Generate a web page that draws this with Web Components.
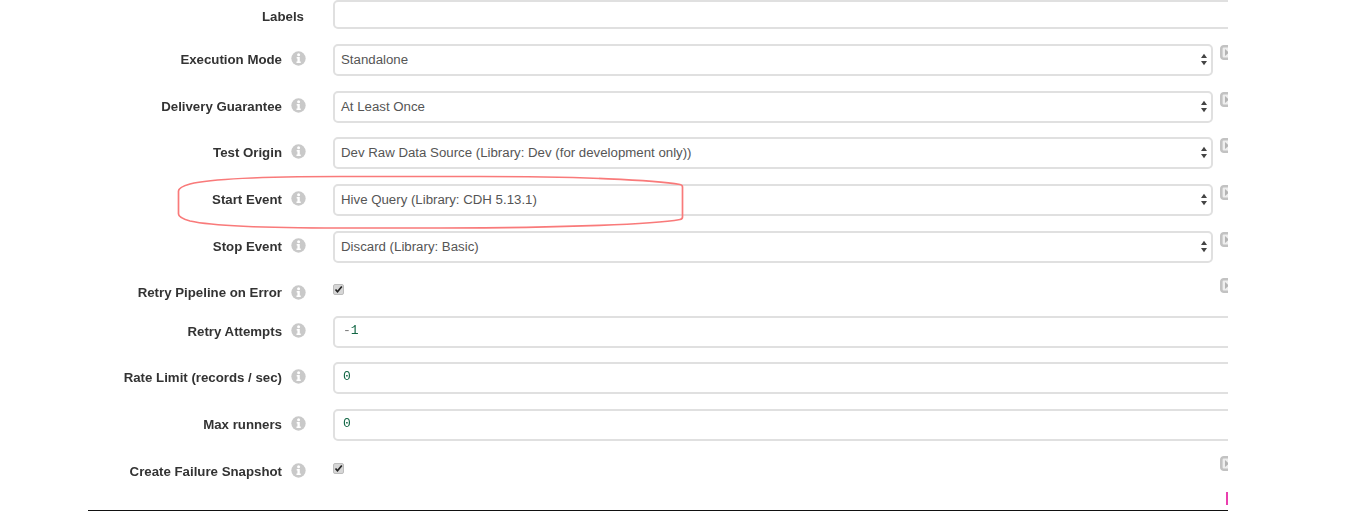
<!DOCTYPE html>
<html><head><meta charset="utf-8"><title>Pipeline configuration</title>
<style>
html,body{margin:0;background:#fff}
body{font:13.25px "Liberation Sans",Arial,sans-serif;color:#333}
</style></head><body>
<x-panel>
  <x-row label="Labels" h="44.4" noinfo><x-field h="29" overflow></x-field></x-row>
  <x-row label="Execution Mode" h="46.6" reset><x-select>Standalone</x-select></x-row>
  <x-row label="Delivery Guarantee" h="46.4" reset><x-select>At Least Once</x-select></x-row>
  <x-row label="Test Origin" h="46.6" reset><x-select>Dev Raw Data Source (Library: Dev (for development only))</x-select></x-row>
  <x-row label="Start Event" h="46.7" reset><x-select>Hive Query (Library: CDH 5.13.1)</x-select></x-row>
  <x-row label="Stop Event" h="46.3" reset><x-select>Discard (Library: Basic)</x-select></x-row>
  <x-row label="Retry Pipeline on Error" h="39" check reset><x-check></x-check></x-row>
  <x-row label="Retry Attempts" h="46.4" mono><x-field h="32" overflow mono><span style="color:#777">-</span><span style="color:#164">1</span></x-field></x-row>
  <x-row label="Rate Limit (records / sec)" h="46.5" mono><x-field h="32" overflow mono><span style="color:#164">0</span></x-field></x-row>
  <x-row label="Max runners" h="46.6" mono><x-field h="32" overflow mono><span style="color:#164">0</span></x-field></x-row>
  <x-row label="Create Failure Snapshot" h="46" check reset labdown><x-check></x-check></x-row>
</x-panel>
<script>
function def(name, css, html, init){
  customElements.define(name, class extends HTMLElement{
    constructor(){super();this.attachShadow({mode:'open'}).innerHTML='<style>'+css+'</style>'+html;}
    connectedCallback(){ if(init) init(this,this.shadowRoot); }
  });
}
def('x-panel',
 `:host{display:block;position:relative;box-sizing:border-box;width:1140px;height:510.5px;margin-left:88px;border-bottom:1.5px solid #111;overflow:hidden;filter:blur(.4px)}
  .pink{position:absolute;right:0;top:492px;width:2px;height:13px;background:#ea3fae}
  svg{position:absolute;left:0;top:0;pointer-events:none}`,
 `<slot></slot><div class="pink"></div>
  <svg width="1140" height="510" viewBox="88 0 1140 510" fill="none"><path d="M190 184C210 179 262 176.500 340 176.500H480C580 176.500 655 180 680 184.500Q682.500 185 682.500 187V217Q682.500 219 680 219.500C655 224 570 228 440 228H340C262 228 208 225 190 221C183 219 178.500 217 178.500 214V191C178.500 188 183 186 190 184Z" stroke="#f97a7a" stroke-width="1.700"/></svg>`);
def('x-info',
 `:host{display:block;width:15px;height:15px}svg{display:block}`,
 `<svg width="15" height="15" viewBox="0 0 14 14"><circle cx="7" cy="7" r="6.700" fill="#c9c9c9"/><circle cx="7.100" cy="3.500" r="1.400" fill="#fff"/><path d="M5.300 5.700H8.200V9.900H9.100V11.100H5.100V9.900H6V6.900H5.300Z" fill="#fff"/></svg>`);
def('x-reset',
 `:host{display:block;width:15px;height:15px}svg{display:block}`,
 `<svg width="15" height="15" viewBox="0 0 15 15" fill="none"><rect x="1.300" y="1.300" width="12.400" height="12.400" rx="2.500" fill="#eee" stroke="#c2c2c2" stroke-width="2.600"/><path d="M5 4L9 7.500L5 11Z" fill="#b4b4b4"/></svg>`);
def('x-row',
 `:host{display:flex;align-items:flex-start;box-sizing:border-box}
  .lab{width:194px;flex:none;text-align:right;font-weight:700;font-size:13.25px;line-height:31px;color:#333;white-space:nowrap}
  .info{width:51px;flex:none;box-sizing:border-box;padding:7px 0 0 9px}
  .body{width:880px;flex:none;min-width:0}
  .reset{margin-left:7px;margin-top:1px;flex:none}`,
 `<div class="lab"></div><div class="info"></div><div class="body"><slot></slot></div><div class="reset"></div>`,
 (el,r)=>{
  el.style.height=el.getAttribute('h')+'px';
  const lab=r.querySelector('.lab'), info=r.querySelector('.info');
  lab.textContent=el.getAttribute('label');
  if(!el.hasAttribute('noinfo')) info.appendChild(document.createElement('x-info'));
  else { lab.style.lineHeight='33px'; lab.style.width='216px'; info.style.width='29px'; }
  if(el.hasAttribute('mono')) lab.style.lineHeight='32px';
  if(el.hasAttribute('reset')) r.querySelector('.reset').appendChild(document.createElement('x-reset'));
  if(el.hasAttribute('check')){ lab.style.lineHeight=el.hasAttribute('labdown')?'32px':'30px'; lab.style.marginTop='1px'; info.style.marginTop='1px'; }
 });
def('x-select',
 `:host{display:block;box-sizing:border-box;height:32px;width:880px;border:2px solid #e0e0e0;border-radius:5px;padding:0 6px;font-size:13.25px;line-height:27px;color:#555;position:relative;background:#fff}
  svg{position:absolute;right:3px;top:7px}`,
 `<slot></slot><svg width="8" height="13" viewBox="0 0 8 13"><path d="M4 .800L7 5H1ZM4 12.200L1 8H7Z" fill="#444"/></svg>`);
def('x-field',
 `:host{display:block;box-sizing:border-box;width:960px;border:2px solid #e0e0e0;border-radius:5px;padding:0 8px;font-size:13px;line-height:27px;color:#555;background:#fff}
  :host([mono]){font-family:"Liberation Mono",monospace;font-size:13px;line-height:26px}`,
 `<slot></slot>`,
 (el)=>{el.style.height=el.getAttribute('h')+'px';});
def('x-check',
 `:host{display:block;box-sizing:border-box;width:11px;height:11px;margin-top:7.500px;border-radius:2px;background:#d6d6d6;border:1px solid #bcbcbc}
  svg{display:block}`,
 `<svg width="9" height="9" viewBox="0 0 9 9" fill="none"><path d="M1.500 4.500L3.500 6.800L7.800 1.500" stroke="#222" stroke-width="1.700"/></svg>`);
</script>
</body></html>
